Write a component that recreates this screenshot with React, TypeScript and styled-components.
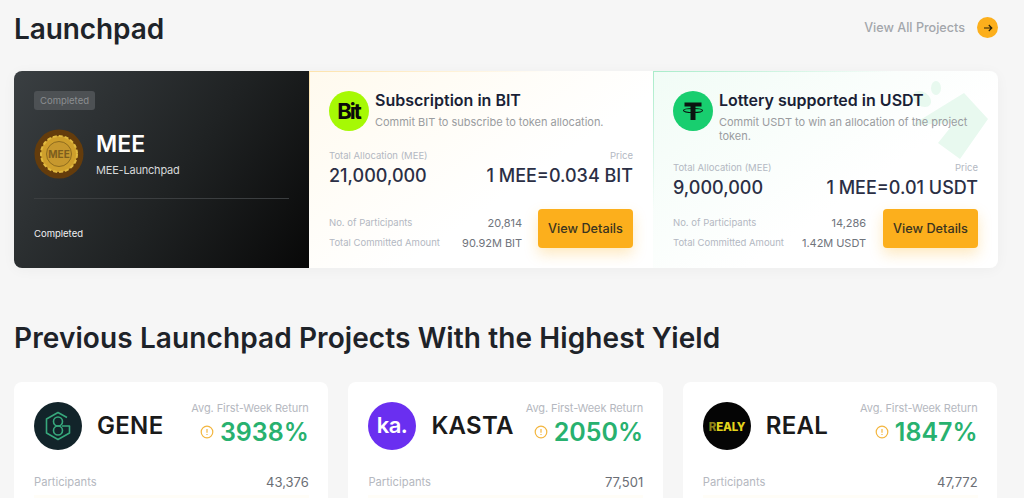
import React from "react";
import styled, { createGlobalStyle } from "styled-components";

const Global = createGlobalStyle`
  html, body { margin: 0; padding: 0; background: #f6f6f6; height: 498px; overflow: hidden; }
  body { font-family: "Inter", "Liberation Sans", sans-serif; }
  * { box-sizing: border-box; }
`;

const Page = styled.div`
  width: 1024px;
  height: 498px;
  overflow: hidden;
  padding: 0 26px 0 14px;
  background: #f6f6f6;
`;
const TopBar = styled.header`
  height: 71px;
  padding-top: 11px;
  display: flex;
  justify-content: space-between;
  align-items: flex-start;
`;
const Title = styled.h1`
  margin: 0;
  font-size: 28px;
  line-height: 36px;
  font-weight: 600;
  letter-spacing: -0.1px;
  color: #1e2329;
`;
const AllLink = styled.a`
  display: flex;
  align-items: center;
  gap: 12px;
  margin-top: 5px;
  font-size: 12.6px;
  line-height: 22px;
  font-weight: 500;
  color: #a3a6ab;
`;
const AllText = styled.span`
  padding-top: 1px;
`;
const Round = styled.span`
  width: 21px;
  height: 21px;
  border-radius: 50%;
  background: #fcaf1c;
  display: flex;
  align-items: center;
  justify-content: center;
`;
const Hero = styled.section`
  display: grid;
  grid-template-columns: 295px 344px 345px;
  height: 197px;
  border-radius: 8px;
  box-shadow: 0 2px 14px rgba(0, 0, 0, 0.04);
`;
const Dark = styled.div`
  border-radius: 8px 0 0 8px;
  padding: 20px 20px 0;
  background: linear-gradient(125deg, #3a3f42 0%, #1f2223 55%, #080808 100%);
  display: flex;
  flex-direction: column;
`;
const Badge = styled.span`
  align-self: flex-start;
  height: 19px;
  padding: 0 6px;
  border-radius: 3px;
  background: #4d5154;
  color: #8b8e90;
  font-size: 9.5px;
  line-height: 19px;
`;
const Brand = styled.div`
  display: flex;
  align-items: center;
  gap: 12px;
  margin-top: 19px;
`;
const BrandName = styled.div`
  color: #fff;
  font-size: 23px;
  line-height: 28px;
  font-weight: 600;
`;
const BrandSub = styled.div`
  color: #d6d8d9;
  font-size: 11px;
  line-height: 14px;
  margin: 5px 0 2px;
  letter-spacing: -0.2px;
`;
const Rule = styled.hr`
  margin: 19px 0 0;
  border: 0;
  border-top: 1px solid #3b3e40;
`;
const Status = styled.div`
  margin-top: 28px;
  color: #f0f0f0;
  font-size: 9.5px;
  line-height: 14px;
`;
const Panel = styled.div<{ $tone: string; $edge: string; $end?: boolean }>`
  position: relative;
  overflow: hidden;
  padding: 20px 20px 0;
  background:
    linear-gradient(to bottom, ${(p) => p.$edge}, #ffffff00 70%) 0 0 / 1px 100% no-repeat,
    linear-gradient(to right, ${(p) => p.$edge}, #ffffff00 70%) 0 0 / 100% 1px no-repeat,
    linear-gradient(145deg, ${(p) => p.$tone} 0%, #fff 60%);
  border-radius: ${(p) => (p.$end ? "0 8px 8px 0" : "0")};
  display: flex;
  flex-direction: column;
`;
const Deco = styled.svg`
  position: absolute;
  top: 10px;
  right: 10px;
`;
const PanelHead = styled.div`
  position: relative;
  display: flex;
  gap: 6px;
  min-height: 40px;
`;
const HeadText = styled.div`
  margin-top: -1px;
`;
const PanelTitle = styled.div`
  color: #1a1f36;
  font-size: 16px;
  line-height: 20px;
  font-weight: 600;
`;
const PanelSub = styled.div`
  color: #9a9c9f;
  font-size: 11px;
  line-height: 13.5px;
  margin-top: 6px;
  letter-spacing: -0.02px;
`;
const Stats = styled.div`
  position: relative;
  display: flex;
  justify-content: space-between;
  margin-top: 19px;
`;
const StatCol = styled.div<{ $right?: boolean }>`
  text-align: ${(p) => (p.$right ? "right" : "left")};
`;
const Tiny = styled.div`
  color: #b3b8c2;
  font-size: 9.5px;
  line-height: 12px;
`;
const Big = styled.div`
  color: #2b2f45;
  font-size: 18px;
  line-height: 22px;
  font-weight: 500;
  margin-top: 3px;
`;
const Foot = styled.div`
  position: relative;
  margin-top: auto;
  margin-bottom: 20px;
  display: flex;
  justify-content: space-between;
  align-items: flex-end;
`;
const FootRows = styled.div`
  width: 193px;
  margin-bottom: -1px;
  display: flex;
  flex-direction: column;
  gap: 8px;
`;
const FootRow = styled.div`
  display: flex;
  justify-content: space-between;
  align-items: center;
  height: 12px;
`;
const FootVal = styled.span`
  color: #70747c;
  font-size: 11px;
  letter-spacing: -0.05px;
`;
const Cta = styled.button`
  width: 95px;
  height: 39px;
  border: 0;
  border-radius: 4px;
  background: #fcaf1c;
  color: #3a3420;
  font-family: inherit;
  font-size: 12.7px;
  font-weight: 500;
  box-shadow: 0 6px 14px rgba(252, 175, 28, 0.28);
`;
const H2 = styled.h2`
  margin: 0;
  padding-top: 54px;
  height: 114px;
  font-size: 28px;
  line-height: 32px;
  font-weight: 600;
  color: #1e2329;
  letter-spacing: 0.1px;
`;
const CardRow = styled.section`
  display: grid;
  grid-template-columns: repeat(3, 314.4px);
  column-gap: 20px;
`;
const Card = styled.article`
  height: 140px;
  padding: 20px 19.6px 20px 20px;
  background: #fff;
  border-radius: 8px;
`;
const CardHead = styled.div`
  display: flex;
  justify-content: space-between;
  align-items: center;
`;
const Coin = styled.div`
  display: flex;
  align-items: center;
  gap: 15px;
`;
const CoinName = styled.div`
  color: #1a1a1a;
  font-size: 24px;
  line-height: 30px;
  font-weight: 600;
  letter-spacing: 0.3px;
`;
const Ret = styled.div`
  text-align: right;
  margin-bottom: 3px;
`;
const RetLabel = styled.div`
  color: #b5b8c0;
  font-size: 11px;
  line-height: 13px;
  letter-spacing: -0.08px;
`;
const RetVal = styled.div`
  display: flex;
  justify-content: flex-end;
  align-items: center;
  gap: 6px;
  margin-top: 2px;
  color: #28b16f;
  font-size: 25px;
  line-height: 30px;
  font-weight: 600;
`;
const PartRow = styled.div`
  display: flex;
  justify-content: space-between;
  margin-top: 23px;
  line-height: 18px;
`;
const PartLabel = styled.span`
  color: #b5b8c0;
  font-size: 11.2px;
`;
const PartVal = styled.span`
  color: #6b6e75;
  font-size: 13px;
`;
const Highlight = styled.div`
  height: 30px;
  margin-top: 4px;
  background: #fffdf7;
`;

const Arrow = () => (
  <svg width="10" height="10" viewBox="0 0 10 10" fill="none" stroke="#2a2208" strokeWidth="1.2">
    <path d="M1 5h8M5.8 2l3 3-3 3" />
  </svg>
);
const BitIcon = () => (
  <svg width="40" height="40" viewBox="0 0 40 40" style={{ flex: "none" }}>
    <circle cx="20" cy="20" r="20" fill="#a6f904" />
    <text x="19.5" y="28" textAnchor="middle" fontFamily="Inter" fontWeight="700" fontSize="22" letterSpacing="-2" fill="#0a0a0a">Bit</text>
  </svg>
);
const TetherIcon = () => (
  <svg width="40" height="40" viewBox="0 0 40 40" style={{ flex: "none" }}>
    <circle cx="20" cy="20" r="20" fill="#18ce6f" />
    <path d="M11.5 11.5h17v4h-6V29h-5V15.5h-6z" fill="#0b1410" />
    <ellipse cx="20" cy="19.5" rx="9.5" ry="2" fill="none" stroke="#0b1410" strokeWidth="1.1" />
  </svg>
);
const MeeIcon = () => (
  <svg width="50" height="50" viewBox="0 0 50 50" style={{ flex: "none" }}>
    <circle cx="25" cy="25" r="24.5" fill="#643c0c" />
    <circle cx="25" cy="25" r="18" fill="#cf9f2c" />
    <circle cx="25" cy="25" r="18" fill="none" stroke="#e0b93f" strokeWidth="2" strokeDasharray="4 2" />
    <circle cx="25" cy="25" r="12.5" fill="#c7982e" stroke="#8f6c1e" strokeWidth="1" />
    <text x="25" y="29" textAnchor="middle" fontFamily="Inter" fontWeight="700" fontSize="10" fill="#7d5e1d">MEE</text>
  </svg>
);
const GeneIcon = () => (
  <svg width="48" height="48" viewBox="0 0 48 48" style={{ flex: "none" }}>
    <circle cx="24" cy="24" r="24" fill="#12242a" />
    <g fill="none" stroke="#37a87c" strokeWidth="1.6" strokeLinejoin="round">
      <path d="M33 15.5L24 10.5 12.5 17v14L24 37.5 35.5 31V24H28" />
      <circle cx="24" cy="19.5" r="4.5" />
      <circle cx="24" cy="28.5" r="4.5" />
    </g>
  </svg>
);
const KastaIcon = () => (
  <svg width="48" height="48" viewBox="0 0 48 48" style={{ flex: "none" }}>
    <circle cx="24" cy="24" r="24" fill="#6a2ff0" />
    <text x="24" y="31" textAnchor="middle" fontFamily="Inter" fontWeight="600" fontSize="22" letterSpacing="-0.6" fill="#fff">ka.</text>
  </svg>
);
const RealIcon = () => (
  <svg width="48" height="48" viewBox="0 0 48 48" style={{ flex: "none" }}>
    <circle cx="24" cy="24" r="24" fill="#050505" />
    <text x="24" y="28.5" textAnchor="middle" fontFamily="Inter" fontWeight="800" fontSize="11.5" letterSpacing="-0.2" fill="#e3d41c">
      <tspan fill="#8f8418">R</tspan>EALY
    </text>
  </svg>
);
const InfoIcon = () => (
  <svg width="14" height="14" viewBox="0 0 14 14" fill="none" stroke="#f3b63f" strokeWidth="1.2">
    <circle cx="7" cy="7" r="5.8" />
    <path d="M7 4v3.8M7 9v1" />
  </svg>
);

const panels = [
  {
    tone: "#fffaee", edge: "#fde3ad", icon: <BitIcon />, title: "Subscription in BIT",
    sub: "Commit BIT to subscribe to token allocation.", alloc: "21,000,000", price: "1 MEE=0.034 BIT",
    parts: "20,814", amount: "90.92M BIT", end: false,
  },
  {
    tone: "#f1fcf6", edge: "#a9ecca", icon: <TetherIcon />, title: "Lottery supported in USDT",
    sub: "Commit USDT to win an allocation of the project token.", alloc: "9,000,000", price: "1 MEE=0.01 USDT",
    parts: "14,286", amount: "1.42M USDT", end: true,
  },
];
const cards = [
  { icon: <GeneIcon />, name: "GENE", ret: "3938%", parts: "43,376" },
  { icon: <KastaIcon />, name: "KASTA", ret: "2050%", parts: "77,501" },
  { icon: <RealIcon />, name: "REAL", ret: "1847%", parts: "47,772" },
];

export default function App() {
  return (
    <Page>
      <Global />
      <TopBar>
        <Title>Launchpad</Title>
        <AllLink><AllText>View All Projects</AllText><Round><Arrow /></Round></AllLink>
      </TopBar>
      <Hero>
        <Dark>
          <Badge>Completed</Badge>
          <Brand>
            <MeeIcon />
            <div>
              <BrandName>MEE</BrandName>
              <BrandSub>MEE-Launchpad</BrandSub>
            </div>
          </Brand>
          <Rule />
          <Status>Completed</Status>
        </Dark>
        {panels.map((p) => (
          <Panel key={p.title} $tone={p.tone} $edge={p.edge} $end={p.end}>
            {p.end && (
              <Deco width="84" height="84" viewBox="0 0 84 84">
                <g fill="#e8f9ef">
                  <ellipse cx="18" cy="18" rx="10" ry="7" transform="rotate(35 18 18)" />
                  <ellipse cx="32" cy="7" rx="5" ry="7" />
                  <path d="M8 44L60 12l24 26-28 40-22-16 16-20z" />
                </g>
              </Deco>
            )}
            <PanelHead>
              {p.icon}
              <HeadText>
                <PanelTitle>{p.title}</PanelTitle>
                <PanelSub>{p.sub}</PanelSub>
              </HeadText>
            </PanelHead>
            <Stats>
              <StatCol>
                <Tiny>Total Allocation (MEE)</Tiny>
                <Big>{p.alloc}</Big>
              </StatCol>
              <StatCol $right>
                <Tiny>Price</Tiny>
                <Big>{p.price}</Big>
              </StatCol>
            </Stats>
            <Foot>
              <FootRows>
                <FootRow><Tiny>No. of Participants</Tiny><FootVal>{p.parts}</FootVal></FootRow>
                <FootRow><Tiny>Total Committed Amount</Tiny><FootVal>{p.amount}</FootVal></FootRow>
              </FootRows>
              <Cta>View Details</Cta>
            </Foot>
          </Panel>
        ))}
      </Hero>
      <H2>Previous Launchpad Projects With the Highest Yield</H2>
      <CardRow>
        {cards.map((c) => (
          <Card key={c.name}>
            <CardHead>
              <Coin>{c.icon}<CoinName>{c.name}</CoinName></Coin>
              <Ret>
                <RetLabel>Avg. First-Week Return</RetLabel>
                <RetVal><InfoIcon />{c.ret}</RetVal>
              </Ret>
            </CardHead>
            <PartRow>
              <PartLabel>Participants</PartLabel>
              <PartVal>{c.parts}</PartVal>
            </PartRow>
            <Highlight />
          </Card>
        ))}
      </CardRow>
    </Page>
  );
}
